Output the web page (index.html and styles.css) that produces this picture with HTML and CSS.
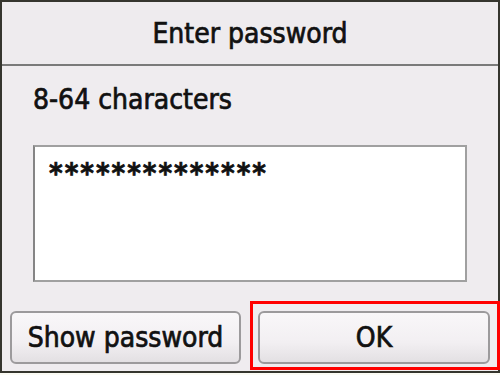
FILE: index.html
```html
<!DOCTYPE html>
<html>
<head>
<meta charset="utf-8">
<link rel="stylesheet" href="styles.css">
</head>
<body>
<div class="screen">
  <div class="header">Enter password</div>
  <div class="content">
    <div class="label">8-64 characters</div>
    <div class="field">**************</div>
    <div class="actions">
      <div class="btn btn-show">Show password</div>
      <div class="focus">
        <div class="btn btn-ok">OK</div>
      </div>
    </div>
  </div>
</div>
</body>
</html>
```

FILE: styles.css
```css
html, body {
  margin: 0;
  padding: 0;
  background: #fbfbf4;
}
.screen {
  width: 500px;
  height: 373px;
  box-sizing: border-box;
  border: 2px solid #35352e;
  background: #efecef;
  font-family: "DejaVu Sans Condensed", "DejaVu Sans", sans-serif;
  color: #111;
  -webkit-text-stroke: 0.7px #111;
  display: flex;
  flex-direction: column;
}
.header {
  height: 62px;
  border-bottom: 2px solid #7a7a7a;
  box-sizing: content-box;
  display: flex;
  align-items: center;
  justify-content: center;
  font-size: 28px;
  background: #eeebee;
}
.content {
  flex: 1;
  display: flex;
  flex-direction: column;
}
.label {
  font-size: 28px;
  height: 79px;
  line-height: 32px;
  padding-left: 31px;
  padding-top: 18px;
  box-sizing: border-box;
}
.field {
  margin-left: 31px;
  width: 434px;
  height: 137px;
  box-sizing: border-box;
  background: #fff;
  border: 2px solid #a0a0a0;
  border-left-color: #858585;
  font-size: 29px;
  font-weight: bold;
  letter-spacing: 2px;
  padding: 10px 0 0 14px;
  line-height: 32px;
}
.actions {
  display: flex;
  align-items: flex-start;
  margin-top: 19px;
  padding-left: 8px;
  margin-right: -2px;
}
.btn {
  height: 53px;
  box-sizing: border-box;
  border: 2px solid #9c9a9c;
  border-radius: 6px;
  background: linear-gradient(#f9f7f9, #f2eff2 60%, #e3e0e3);
  display: flex;
  align-items: center;
  justify-content: center;
  font-size: 28px;
}
.btn-show {
  width: 231px;
  margin-top: 10px;
}
.focus {
  margin-left: 9px;
  width: 250px;
  height: 69px;
  box-sizing: border-box;
  border: 3px solid #f00;
  padding: 7px 7px 0 5px;
}
.btn-ok {
  width: 232px;
}
```
